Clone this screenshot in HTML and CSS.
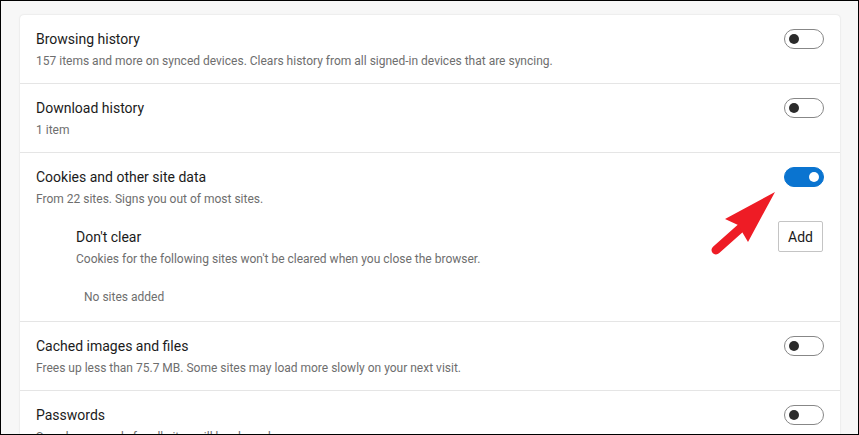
FILE: index.html
```html
<!DOCTYPE html>
<html lang="en">
<head>
<meta charset="UTF-8">
<meta name="viewport" content="width=device-width, initial-scale=1.0">
<title>Clear browsing data</title>
<link rel="stylesheet" href="styles.css">
</head>
<body>
<div class="page">
  <div class="card">

    <!-- Browsing history -->
    <div class="row">
      <div class="row-text">
        <div class="row-title">Browsing history</div>
        <div class="row-sub">157 items and more on synced devices. Clears history from all signed-in devices that are syncing.</div>
      </div>
      <span class="toggle"></span>
    </div>

    <!-- Download history -->
    <div class="row">
      <div class="row-text">
        <div class="row-title">Download history</div>
        <div class="row-sub">1 item</div>
      </div>
      <span class="toggle"></span>
    </div>

    <!-- Cookies, with the "Don't clear" list -->
    <div class="row">
      <div class="row-text">
        <div class="row-title">Cookies and other site data</div>
        <div class="row-sub">From 22 sites. Signs you out of most sites.</div>
        <div class="subsection">
          <div class="subsection-head">
            <div class="subsection-text">
              <div class="row-title">Don't clear</div>
              <div class="row-sub">Cookies for the following sites won't be cleared when you close the browser.</div>
            </div>
            <button class="btn">Add</button>
          </div>
          <div class="empty">No sites added</div>
        </div>
      </div>
      <span class="toggle on"></span>
    </div>

    <!-- Cached images -->
    <div class="row">
      <div class="row-text">
        <div class="row-title">Cached images and files</div>
        <div class="row-sub">Frees up less than 75.7 MB. Some sites may load more slowly on your next visit.</div>
      </div>
      <span class="toggle"></span>
    </div>

    <!-- Passwords -->
    <div class="row">
      <div class="row-text">
        <div class="row-title">Passwords</div>
        <div class="row-sub">Saved passwords for all sites will be cleared.</div>
      </div>
      <span class="toggle"></span>
    </div>

  </div>
</div>

<!-- annotation arrow drawn over the page -->
<svg class="arrow" width="859" height="435" viewBox="0 0 859 435">
  <line x1="716" y1="250" x2="743" y2="226" stroke="#ee1c25" stroke-width="9" stroke-linecap="round"/>
  <polygon points="775,192 725,219 738,225 748,242" fill="#ee1c25"/>
</svg>
</body>
</html>
```

FILE: styles.css
```css
* {
  box-sizing: border-box;
}
body {
  margin: 0;
  height: 435px;
  overflow: hidden;
  border: 1px solid #000;
  background-color: #f7f7f7;
  font-family: "Segoe UI", Roboto, "Noto Sans", sans-serif;
  color: #1b1b1b;
}
.page {
  padding: 14px 18px 0 19px;
}
.card {
  width: 820px;
  background-color: #fff;
  border-radius: 4px 4px 0 0;
  box-shadow: 0 0 2px rgba(0, 0, 0, 0.14);
}
.row {
  display: flex;
  align-items: flex-start;
  padding: 14px 16px;
  border-bottom: 1px solid #e5e5e5;
}
.row-text {
  flex: 1;
}
.row-title {
  font-size: 14px;
  line-height: 20px;
  color: #1b1b1b;
}
.row-sub {
  margin-top: 4px;
  font-size: 12px;
  line-height: 16px;
  color: #6e6e6e;
}
.toggle {
  position: relative;
  flex: none;
  width: 40px;
  height: 20px;
  border: 1px solid #878787;
  border-radius: 10px;
  background-color: #fff;
}
.toggle::after {
  content: "";
  position: absolute;
  top: 4px;
  left: 4px;
  width: 10px;
  height: 10px;
  border-radius: 50%;
  background-color: #2b2b2b;
}
.toggle.on {
  border-color: #0a74d0;
  background-color: #0a74d0;
}
.toggle.on::after {
  left: auto;
  right: 4px;
  background-color: #fff;
}
.subsection {
  margin-top: 14px;
  padding-left: 40px;
}
.subsection-head {
  display: flex;
  align-items: flex-start;
}
.subsection-text {
  flex: 1;
  padding-top: 6px;
}
.btn {
  width: 45px;
  height: 31px;
  margin-right: -39px;
  padding: 0;
  border: 1px solid #c4c4c4;
  border-radius: 2px;
  background-color: #fff;
  font-family: inherit;
  font-size: 14px;
  color: #1b1b1b;
}
.empty {
  margin-top: 20px;
  padding-left: 8px;
  font-size: 12px;
  line-height: 20px;
  color: #6e6e6e;
}
.arrow {
  position: absolute;
  top: 0;
  left: 0;
  pointer-events: none;
}
```
